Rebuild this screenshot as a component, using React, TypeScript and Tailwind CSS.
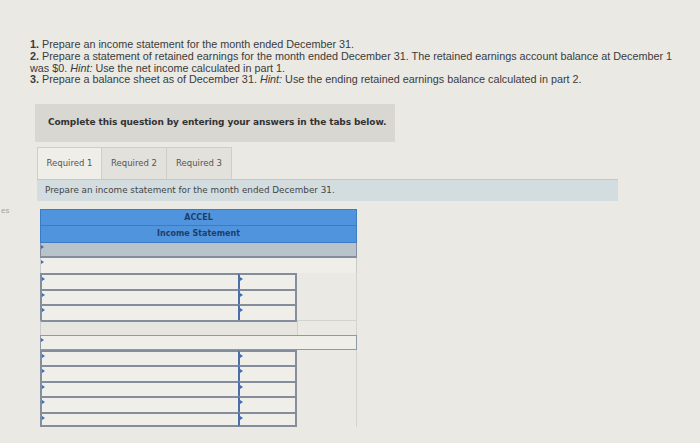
import React from 'react'

const sans = { fontFamily: '"Liberation Sans", Arial, sans-serif' }
const verdana = { fontFamily: '"DejaVu Sans", Verdana, sans-serif' }

function Marker() {
  return (
    <span className="absolute left-0 top-[2px] h-0 w-0 border-y-[2px] border-l-[3px] border-y-transparent border-l-[#3b6fb8]" />
  )
}

function SplitRow({ last = false }: { last?: boolean }) {
  return (
    <div className="grid grid-cols-[198px_59px_60px]">
      <div className={`relative h-[15.5px] border-l-2 border-t-2 border-[#848d9b] bg-[#efeee9] ${last ? 'border-b-2' : ''}`}>
        <Marker />
      </div>
      <div className={`relative h-[15.5px] border-x-2 border-t-2 border-[#848d9b] border-l-[#4c6fa8] bg-[#efeee9] ${last ? 'border-b-2' : ''}`}>
        <Marker />
      </div>
      <div className="h-[15.5px] border-r border-[#d3d3cf]" />
    </div>
  )
}

export default function App() {
  return (
    <div className="relative h-[443px] w-[700px] overflow-hidden bg-[#eae9e4] text-[#3b3b3b]" style={sans}>
      <span className="absolute left-[1px] top-[205px] text-[8px] text-[#a5a5a0]">es</span>

      <div className="pl-[30px] pt-[39px] text-[10.8px] leading-[11.8px]">
        <p>
          <b>1.</b> Prepare an income statement for the month ended December 31.
        </p>
        <p>
          <b>2.</b> Prepare a statement of retained earnings for the month ended December 31. The retained earnings
          account balance at December 1
        </p>
        <p>
          was $0. <i>Hint:</i> Use the net income calculated in part 1.
        </p>
        <p>
          <b>3.</b> Prepare a balance sheet as of December 31. <i>Hint:</i> Use the ending retained earnings balance
          calculated in part 2.
        </p>
      </div>

      <div className="ml-[35px] mt-[18px] flex h-[38px] w-[360px] items-center bg-[#d8d7d2] pl-[13px]">
        <span className="text-[9px] font-bold tracking-[-0.1px] text-[#333]" style={verdana}>
          Complete this question by entering your answers in the tabs below.
        </span>
      </div>

      <div className="ml-[37px] mt-[5px] flex h-[32px] items-stretch text-[8.5px] text-[#555]" style={verdana}>
        <div className="flex w-[65px] items-center justify-center border-x border-t border-[#cfcec9] bg-[#efeee9]">
          Required 1
        </div>
        <div className="flex w-[65px] items-center justify-center border-r border-t border-[#cfcec9] bg-[#e2e1dc]">
          Required 2
        </div>
        <div className="flex w-[65px] items-center justify-center border-r border-t border-[#cfcec9] bg-[#e2e1dc]">
          Required 3
        </div>
      </div>

      <div className="ml-[37px] flex h-[22px] w-[581px] items-center border-t border-[#c2c9cc] bg-[#d3dde0] pl-[8px]">
        <span className="text-[8.8px] text-[#444]" style={verdana}>
          Prepare an income statement for the month ended December 31.
        </span>
      </div>

      <div className="ml-[40px] mt-[8px] w-[317px] text-[8px] font-bold text-[#1f3d6b]" style={verdana}>
        <div className="flex h-[17px] items-center justify-center border border-[#3d7cc4] bg-[#4f94dc]">ACCEL</div>
        <div className="flex h-[17px] items-center justify-center border-x border-b border-[#3d7cc4] bg-[#4f94dc]">
          Income Statement
        </div>
        <div className="relative h-[15px] border-x border-b-2 border-[#848d9b] bg-[#b8c3cb]">
          <Marker />
        </div>
        <div className="relative h-[15px] border-x border-[#c7c9cc] bg-[#efeee9]">
          <Marker />
        </div>
        <SplitRow />
        <SplitRow />
        <SplitRow />
        <div className="grid grid-cols-[257px_60px]">
          <div className="h-[15px] border-l border-t-2 border-[#848d9b] border-l-[#c7c9cc] bg-[#e6e5e0]" />
          <div className="h-[15px] border-x border-t border-[#d3d3cf]" />
        </div>
        <div className="relative h-[15px] border border-[#8f98a5] bg-[#efeee9]">
          <Marker />
        </div>
        <SplitRow />
        <SplitRow />
        <SplitRow />
        <SplitRow />
        <SplitRow last />
      </div>
    </div>
  )
}
